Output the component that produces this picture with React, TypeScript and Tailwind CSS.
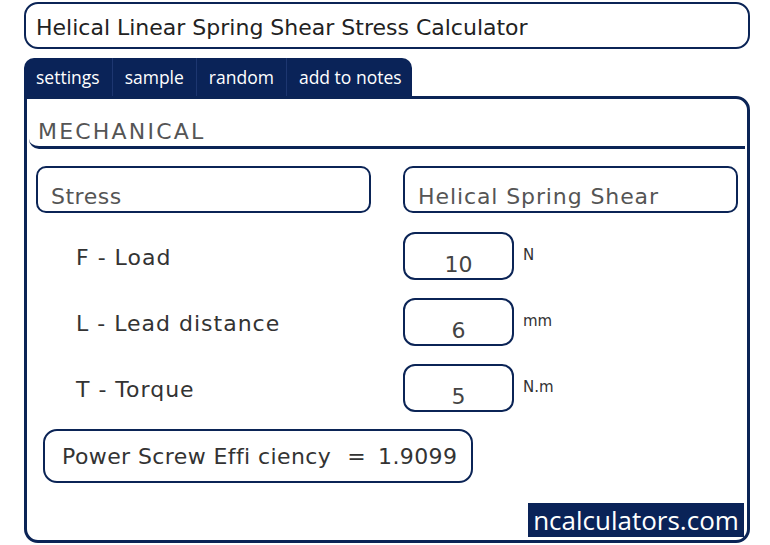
const navy = "border-[#0b2456]";

function ValueRow({ label, value, unit }: { label: string; value: string; unit: string }) {
  return (
    <div className="grid grid-cols-2 gap-[32px] h-[48px]">
      <div className="flex items-center pl-[40px] pt-[2px] text-[22px] tracking-[1px] text-[#333]">{label}</div>
      <div className="flex items-start">
        <div className={`w-[111px] h-[48px] border-2 ${navy} rounded-[12px] flex items-end justify-center pb-[2px] leading-none text-[22px] text-[#444]`}>
          {value}
        </div>
        <span className="ml-[9px] mt-[12px] text-[15px] text-[#333]">{unit}</span>
      </div>
    </div>
  );
}

export default function App() {
  return (
    <div
      className="w-[770px] h-[545px] bg-white pl-[24px] pr-[20px] pt-[2px] flex flex-col"
      style={{ fontFamily: '"DejaVu Sans", "Liberation Sans", sans-serif' }}
    >
      <div className={`h-[47px] border-2 ${navy} rounded-[14px] flex items-center pl-[10px] pt-[4px] text-[22px] text-[#222]`}>
        Helical Linear Spring Shear Stress Calculator
      </div>

      <div
        className="mt-[9px] h-[38px] w-[388px] bg-[#0a2358] rounded-t-[10px] flex items-center text-white text-[17.5px] whitespace-nowrap"
        style={{ fontFamily: '"Open Sans", sans-serif' }}
      >
        <span className="px-[12px] border-r border-[#1d3670] leading-[38px]">settings</span>
        <span className="px-[12px] border-r border-[#1d3670] leading-[38px]">sample</span>
        <span className="px-[12px] border-r border-[#1d3670] leading-[38px]">random</span>
        <span className="px-[12px] leading-[38px]">add to notes</span>
      </div>

      <div className={`flex-1 mb-[2px] border-[3px] ${navy} rounded-b-[14px] rounded-tr-[14px] flex flex-col`}>
        <div className={`mt-[16px] ml-[2px] mr-[2px] h-[34px] border-b-[3px] ${navy} rounded-bl-[10px] pl-[9px] text-[22px] tracking-[2.2px] text-[#555] leading-[34px]`}>
          MECHANICAL
        </div>

        <div className="px-[9px] mt-[17px] flex flex-col">
          <div className="grid grid-cols-2 gap-[32px]">
            <div className={`h-[47px] border-2 ${navy} rounded-[10px] flex items-end pl-[13px] pb-[3px] leading-none text-[22px] tracking-[0.5px] text-[#555]`}>
              Stress
            </div>
            <div className={`h-[47px] border-2 ${navy} rounded-[10px] flex items-end pl-[13px] pb-[3px] leading-none text-[22px] tracking-[0.9px] text-[#555]`}>
              Helical Spring Shear
            </div>
          </div>

          <div className="mt-[19px] flex flex-col gap-[18px]">
            <ValueRow label="F - Load" value="10" unit="N" />
            <ValueRow label="L - Lead distance" value="6" unit="mm" />
            <ValueRow label="T - Torque" value="5" unit="N.m" />
          </div>

          <div className={`mt-[17px] ml-[7px] w-[430px] h-[54px] border-2 ${navy} rounded-[14px] flex items-center pl-[17px] text-[22px] tracking-[0.4px] text-[#333]`}>
            <span>Power Screw Effi ciency</span>
            <span className="ml-[16px]">=</span>
            <span className="ml-[12px]">1.9099</span>
          </div>
        </div>

        <div className="mt-auto mb-[3px] mr-[3px] flex justify-end">
          <div
            className="bg-[#0a2358] text-white text-[26px] h-[34px] w-[216px] flex items-center justify-center"
            style={{ fontFamily: '"Open Sans", sans-serif' }}
          >
            ncalculators.com
          </div>
        </div>
      </div>
    </div>
  );
}
